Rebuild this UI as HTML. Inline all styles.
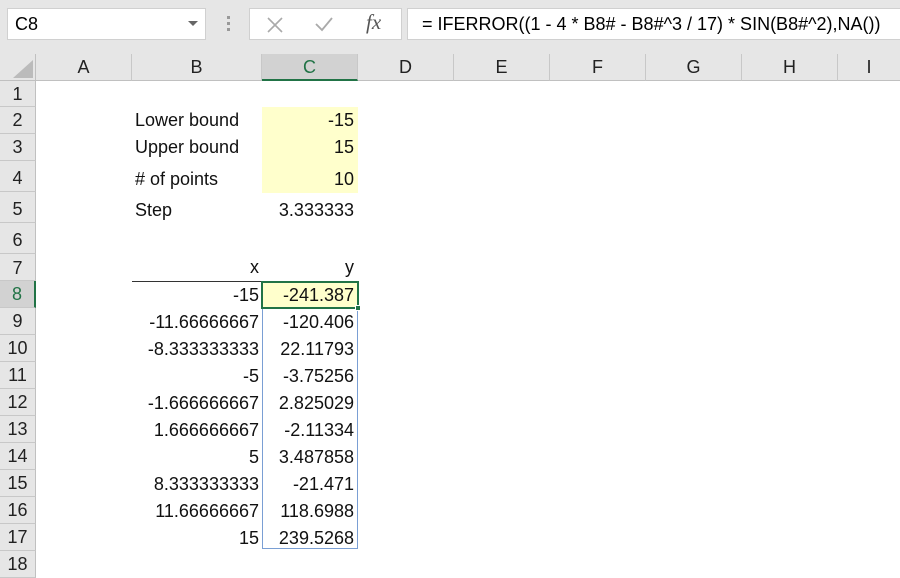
<!DOCTYPE html>
<html><head><style>
*{margin:0;padding:0;box-sizing:border-box}
body{width:900px;height:575px;overflow:hidden;background:#fff;font-family:"Liberation Sans",sans-serif;position:relative}
.a{position:absolute}
.top{left:0;top:0;width:900px;height:54px;background:#e6e6e6}
.box{background:#fff;border:1px solid #d0d0d0}
.ch{top:54px;height:27px;background:#e6e6e6;border-right:1px solid #c8c8c8;border-bottom:1px solid #c0c0c0;font-size:18px;color:#222;text-align:center;line-height:27px}
.rh{left:0;width:36px;background:#e6e6e6;border-bottom:1px solid #c8c8c8;border-right:1px solid #c0c0c0;font-size:18px;color:#222;text-align:center}
.t{font-size:18px;color:#111;white-space:nowrap}
.r{text-align:right}
</style></head><body>
<div class="a top"></div>
<div class="a box" style="left:7px;top:8px;width:199px;height:32px;font-size:18px;line-height:30px;padding-left:7px">C8</div>
<div class="a" style="left:188px;top:21px;width:0;height:0;border-left:5px solid transparent;border-right:5px solid transparent;border-top:5px solid #666"></div>
<div class="a" style="left:227px;top:16px;width:3px;height:17px;background:repeating-linear-gradient(#999 0 3px,transparent 3px 6px)"></div>
<div class="a box" style="left:249px;top:8px;width:153px;height:32px"></div>
<svg class="a" style="left:266px;top:16px" width="18" height="18"><path d="M2 2L16 16M16 2L2 16" stroke="#aaa" stroke-width="1.6"/></svg>
<svg class="a" style="left:314px;top:15px" width="20" height="18"><path d="M2 9L8 15L18 3" stroke="#aaa" stroke-width="1.8" fill="none"/></svg>
<div class="a" style="left:366px;top:10px;font-size:21px;color:#555;font-family:'Liberation Serif',serif;font-style:italic">fx</div>
<div class="a box" style="left:407px;top:8px;width:500px;height:32px;font-size:18px;line-height:30px;padding-left:14px;white-space:nowrap">= IFERROR((1 - 4 * B8# - B8#^3 / 17) * SIN(B8#^2),NA())</div>
<div class="a" style="left:0;top:54px;width:36px;height:27px;background:#e6e6e6;border-right:1px solid #c0c0c0;border-bottom:1px solid #c0c0c0"></div>
<div class="a" style="left:13px;top:60px;width:0;height:0;border-left:20px solid transparent;border-bottom:18px solid #bbb"></div>
<div class="a ch" style="left:36px;width:96px">A</div>
<div class="a ch" style="left:132px;width:130px">B</div>
<div class="a ch" style="left:262px;width:96px;background:#d2d2d2;color:#217346;border-bottom:2px solid #217346">C</div>
<div class="a ch" style="left:358px;width:96px">D</div>
<div class="a ch" style="left:454px;width:96px">E</div>
<div class="a ch" style="left:550px;width:96px">F</div>
<div class="a ch" style="left:646px;width:96px">G</div>
<div class="a ch" style="left:742px;width:96px">H</div>
<div class="a ch" style="left:838px;width:62px;border-right:none">I</div>
<div class="a rh" style="top:81px;height:26px;line-height:26px">1</div>
<div class="a rh" style="top:107px;height:27px;line-height:27px">2</div>
<div class="a rh" style="top:134px;height:27px;line-height:27px">3</div>
<div class="a rh" style="top:161px;height:31px;line-height:34px">4</div>
<div class="a rh" style="top:192px;height:31px;line-height:34px">5</div>
<div class="a rh" style="top:223px;height:31px;line-height:34px">6</div>
<div class="a rh" style="top:254px;height:27px;line-height:29px">7</div>
<div class="a rh" style="top:281px;height:27px;line-height:27px;background:#d2d2d2;color:#217346;border-right:2px solid #217346">8</div>
<div class="a rh" style="top:308px;height:27px;line-height:27px">9</div>
<div class="a rh" style="top:335px;height:27px;line-height:27px">10</div>
<div class="a rh" style="top:362px;height:27px;line-height:27px">11</div>
<div class="a rh" style="top:389px;height:27px;line-height:27px">12</div>
<div class="a rh" style="top:416px;height:27px;line-height:27px">13</div>
<div class="a rh" style="top:443px;height:27px;line-height:27px">14</div>
<div class="a rh" style="top:470px;height:27px;line-height:27px">15</div>
<div class="a rh" style="top:497px;height:27px;line-height:27px">16</div>
<div class="a rh" style="top:524px;height:27px;line-height:27px">17</div>
<div class="a rh" style="top:551px;height:27px;line-height:27px">18</div>
<div class="a" style="left:262px;top:107px;width:96px;height:86px;background:#ffffcc"></div>
<div class="a t" style="left:135px;top:110px">Lower bound</div>
<div class="a t" style="left:135px;top:137px">Upper bound</div>
<div class="a t" style="left:135px;top:169px"># of points</div>
<div class="a t" style="left:135px;top:200px">Step</div>
<div class="a t r" style="left:262px;width:92px;top:110px">-15</div>
<div class="a t r" style="left:262px;width:92px;top:137px">15</div>
<div class="a t r" style="left:262px;width:92px;top:169px">10</div>
<div class="a t r" style="left:262px;width:92px;top:200px">3.333333</div>
<div class="a t r" style="left:132px;width:127px;top:257px">x</div>
<div class="a t r" style="left:262px;width:92px;top:257px">y</div>
<div class="a" style="left:132px;top:281px;width:130px;height:1px;background:#333"></div>
<div class="a" style="left:262px;top:281px;width:96px;height:268px;border:1px solid #7a9fd4"></div>
<div class="a" style="left:261px;top:281px;width:98px;height:28px;border:2px solid #217346;background:#ffffcc"></div>
<div class="a" style="left:355px;top:305px;width:6px;height:6px;background:#217346;border:1px solid #fff"></div>
<div class="a t r" style="left:132px;width:127px;top:282px;line-height:27px">-15<br>-11.66666667<br>-8.333333333<br>-5<br>-1.666666667<br>1.666666667<br>5<br>8.333333333<br>11.66666667<br>15</div>
<div class="a t r" style="left:262px;width:92px;top:282px;line-height:27px">-241.387<br>-120.406<br>22.11793<br>-3.75256<br>2.825029<br>-2.11334<br>3.487858<br>-21.471<br>118.6988<br>239.5268</div>
</body></html>
